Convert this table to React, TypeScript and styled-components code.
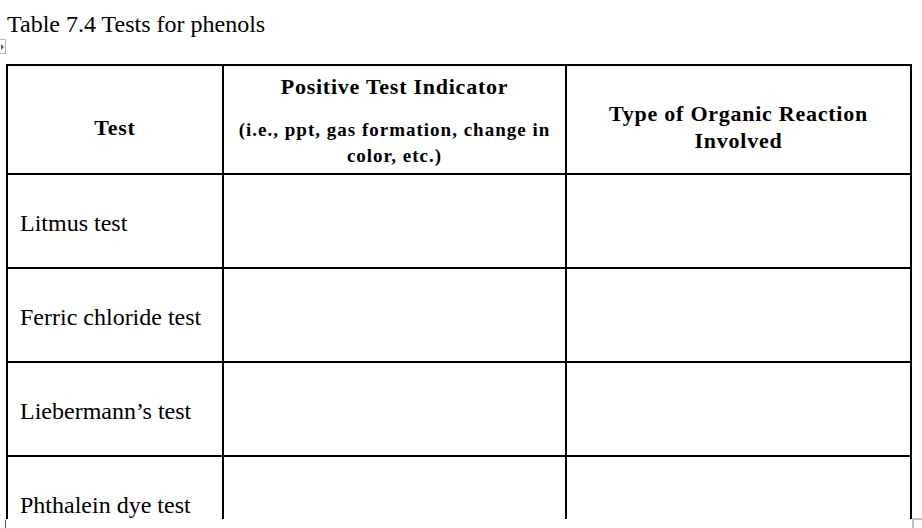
import styled, { createGlobalStyle } from "styled-components";

const rows = [
  "Litmus test",
  "Ferric chloride test",
  "Liebermann\u2019s test",
  "Phthalein dye test",
];

function App() {
  return (
    <>
      <GlobalStyle />
      <Page>
        <Caption>Table 7.4 Tests for phenols</Caption>
        <TableClip>
          <MoveHandle>
            <HandleArrow />
          </MoveHandle>
          <Table>
            <HeadCell $offset={2}>
              <HeadText>Test</HeadText>
            </HeadCell>
            <HeadCell $offset={-11}>
              <HeadText>Positive Test Indicator</HeadText>
              <HeadNote>
                (i.e., ppt, gas formation, change in color, etc.)
              </HeadNote>
            </HeadCell>
            <HeadCell $offset={0} $last>
              <HeadText>
                Type of Organic Reaction
                <br />
                Involved
              </HeadText>
            </HeadCell>
            {rows.map((name) => (
              <Row key={name}>
                <BodyCell>{name}</BodyCell>
                <BodyCell />
                <BodyCell $last />
              </Row>
            ))}
          </Table>
          <Cursor />
        </TableClip>
        <ResizeHandle />
      </Page>
    </>
  );
}

const GlobalStyle = createGlobalStyle`
  html, body {
    margin: 0;
    padding: 0;
    background: #ffffff;
  }

  body {
    font-family: "Liberation Serif", "Times New Roman", serif;
    color: #000000;
  }
`;

const Page = styled.div`
  position: relative;
  width: 922px;
  height: 528px;
  overflow: hidden;
`;

const Caption = styled.div`
  margin: 10px 0 0 7px;

  font-size: 24px;
  line-height: 28px;
`;

const TableClip = styled.div`
  position: relative;

  width: 906px;
  height: 453px;
  margin: 26px 0 0 6px;
`;

const MoveHandle = styled.div`
  position: absolute;
  top: -25px;
  left: -7px;

  display: flex;
  align-items: center;
  justify-content: flex-end;

  width: 6px;
  height: 13px;

  border: 1px solid #b4b4b4;
  border-left: none;
  background: #ffffff;
`;

const HandleArrow = styled.span`
  width: 0;
  height: 0;
  margin-right: 1px;

  border-top: 3px solid transparent;
  border-bottom: 3px solid transparent;
  border-left: 3px solid #606060;
`;

const Table = styled.div`
  display: grid;
  grid-template-columns: 216px 343px 343px;
  grid-template-rows: 109px;
  grid-auto-rows: 94px;

  height: 100%;
  overflow: hidden;

  border: 2px solid #000000;
  border-bottom: none;
`;

const Row = styled.div`
  display: contents;
`;

const HeadCell = styled.div<{ $offset?: number; $last?: boolean }>`
  display: flex;
  flex-direction: column;
  align-items: center;
  justify-content: center;

  padding-top: ${(p) => 14 + (p.$offset ?? 0)}px;

  border-right: ${(p) => (p.$last ? "none" : "2px solid #000000")};
  border-bottom: 2px solid #000000;

  text-align: center;
`;

const HeadText = styled.div`
  font-size: 22px;
  font-weight: bold;
  line-height: 27px;
  letter-spacing: 0.75px;
`;

const HeadNote = styled.div`
  width: 320px;
  margin-top: 17px;

  font-size: 19px;
  font-weight: bold;
  line-height: 26px;
  letter-spacing: 1px;
`;

const BodyCell = styled.div<{ $last?: boolean }>`
  padding: 34px 0 0 12px;

  border-right: ${(p) => (p.$last ? "none" : "2px solid #000000")};
  border-bottom: 2px solid #000000;

  font-size: 24px;
  line-height: 28px;
`;

const Cursor = styled.div`
  position: absolute;
  top: 456px;
  left: -1px;

  width: 1px;
  height: 12px;

  background: #555555;
`;

const ResizeHandle = styled.div`
  position: absolute;
  top: 518px;
  left: 912px;

  width: 10px;
  height: 10px;

  border-top: 2px solid #c0c0c0;
  border-left: 2px solid #c0c0c0;
`;

export default App;
